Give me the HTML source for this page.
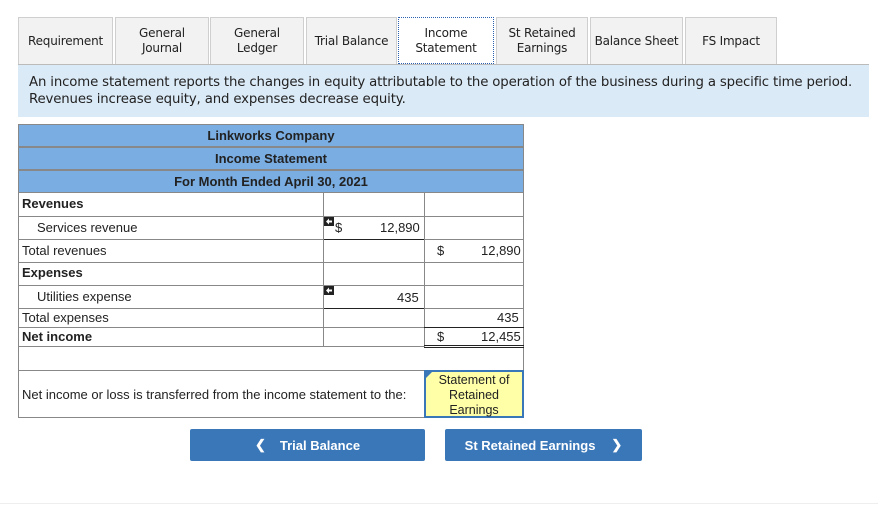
<!DOCTYPE html>
<html><head><style>
*{box-sizing:border-box;margin:0;padding:0}
body{width:878px;height:510px;background:#fff;position:relative;font-family:"Liberation Sans",Arial,sans-serif;overflow:hidden}
.a{position:absolute}
.tab{position:absolute;top:17px;height:47px;background:#f2f2f2;border:1px solid #cfcfcf;border-bottom:none;font-family:"DejaVu Sans",sans-serif;font-size:12px;color:#222;display:flex;align-items:center;justify-content:center;text-align:center;line-height:15px;letter-spacing:-0.2px}
.c{position:absolute;font-size:13px;color:#222;white-space:nowrap}
.h{position:absolute;left:18px;width:506px;height:23px;background:#7aade2;border:1px solid #888;font-weight:bold;font-size:13px;color:#222;text-align:center;line-height:22px}
.ln{position:absolute;background:#888}
.btn{position:absolute;top:429px;height:32px;background:#3a77b8;border-radius:2px;color:#fff;font-weight:bold;font-size:13px;display:flex;align-items:center;justify-content:center}
.ic{position:absolute;width:10px;height:9px;background:#222;overflow:hidden}
.ic svg{display:block}
</style></head><body>
<div class="tab" style="left:18px;width:95px">Requirement</div>
<div class="tab" style="left:115px;width:94px">General<br>Journal</div>
<div class="tab" style="left:210px;width:94px">General<br>Ledger</div>
<div class="tab" style="left:306px;width:91px">Trial Balance</div>
<div class="tab" style="left:398px;width:96px;background:#fff;border:1px dotted #2a5fb0;border-bottom:1px dotted #2a5fb0">Income<br>Statement</div>
<div class="tab" style="left:496px;width:92px">St Retained<br>Earnings</div>
<div class="tab" style="left:590px;width:93px">Balance Sheet</div>
<div class="tab" style="left:685px;width:92px">FS Impact</div>
<div class="a" style="left:18px;top:64px;width:851px;height:53px;background:#dbeaf7;border-top:1px solid #bbb;font-family:'DejaVu Sans',sans-serif;font-size:13.3px;color:#222;padding:9px 0 0 11px;line-height:17px;letter-spacing:-0.15px;white-space:nowrap">An income statement reports the changes in equity attributable to the operation of the business during a specific time period.<br>Revenues increase equity, and expenses decrease equity.</div>

<div class="h" style="top:124px">Linkworks Company</div>
<div class="h" style="top:147px">Income Statement</div>
<div class="h" style="top:170px">For Month Ended April 30, 2021</div>

<div class="ln" style="left:18px;top:193px;width:1px;height:154px"></div>
<div class="ln" style="left:523px;top:193px;width:1px;height:225px"></div>
<div class="ln" style="left:323px;top:193px;width:1px;height:154px"></div>
<div class="ln" style="left:424px;top:193px;width:1px;height:154px"></div>
<div class="ln" style="left:18px;top:216px;width:506px;height:1px"></div>
<div class="ln" style="left:18px;top:239px;width:306px;height:1px"></div>
<div class="ln" style="left:324px;top:239px;width:100px;height:1px;background:#222"></div>
<div class="ln" style="left:424px;top:239px;width:100px;height:1px"></div>
<div class="ln" style="left:18px;top:262px;width:506px;height:1px"></div>
<div class="ln" style="left:18px;top:285px;width:506px;height:1px"></div>
<div class="ln" style="left:18px;top:308px;width:306px;height:1px"></div>
<div class="ln" style="left:324px;top:308px;width:100px;height:1px;background:#222"></div>
<div class="ln" style="left:424px;top:308px;width:100px;height:1px"></div>
<div class="ln" style="left:18px;top:327px;width:406px;height:1px"></div>
<div class="ln" style="left:424px;top:327px;width:100px;height:1px;background:#222"></div>
<div class="ln" style="left:18px;top:346px;width:406px;height:1px"></div>
<div class="ln" style="left:424px;top:345px;width:100px;height:1px;background:#222"></div>
<div class="ln" style="left:424px;top:347px;width:100px;height:1px;background:#222"></div>
<div class="ln" style="left:18px;top:347px;width:1px;height:71px"></div>
<div class="ln" style="left:18px;top:370px;width:506px;height:1px"></div>
<div class="ln" style="left:18px;top:417px;width:506px;height:1px"></div>

<div class="c" style="left:22px;top:196px;font-weight:bold">Revenues</div>
<div class="c" style="left:37px;top:220px">Services revenue</div>
<div class="c" style="left:22px;top:243px">Total revenues</div>
<div class="c" style="left:22px;top:265px;font-weight:bold">Expenses</div>
<div class="c" style="left:37px;top:289px">Utilities expense</div>
<div class="c" style="left:22px;top:310px">Total expenses</div>
<div class="c" style="left:22px;top:329px;font-weight:bold">Net income</div>

<div class="ic" style="left:324px;top:217px"><svg width="10" height="9" viewBox="0 0 10 9"><path d="M2 4.5 L5 1.5 L5 3.5 L8 3.5 L8 5.5 L5 5.5 L5 7.5Z" fill="#fff"/></svg></div>
<div class="c" style="left:335px;top:220px">$</div>
<div class="c" style="left:380px;top:220px">12,890</div>
<div class="c" style="left:437px;top:243px">$</div>
<div class="c" style="left:481px;top:243px">12,890</div>
<div class="ic" style="left:324px;top:286px"><svg width="10" height="9" viewBox="0 0 10 9"><path d="M2 4.5 L5 1.5 L5 3.5 L8 3.5 L8 5.5 L5 5.5 L5 7.5Z" fill="#fff"/></svg></div>
<div class="c" style="left:397px;top:290px">435</div>
<div class="c" style="left:497px;top:310px">435</div>
<div class="c" style="left:437px;top:329px">$</div>
<div class="c" style="left:481px;top:329px">12,455</div>

<div class="c" style="left:22px;top:387px">Net income or loss is transferred from the income statement to the:</div>
<div class="a" style="left:424px;top:370px;width:100px;height:48px;background:#ffffa8;border:2px solid #3a77b8;font-size:12.5px;color:#222;text-align:center;line-height:15px;padding-top:1px">Statement of<br>Retained<br>Earnings</div>
<div class="a" style="left:426px;top:372px;width:0;height:0;border-top:6px solid #3a77b8;border-right:6px solid transparent"></div>

<div class="btn" style="left:190px;width:235px"><span style="margin-right:14px">&#10094;</span>Trial Balance</div>
<div class="btn" style="left:445px;width:197px">St Retained Earnings<span style="margin-left:16px">&#10095;</span></div>
<div class="a" style="left:0;top:503px;width:878px;height:1px;background:#eee"></div>
</body></html>
